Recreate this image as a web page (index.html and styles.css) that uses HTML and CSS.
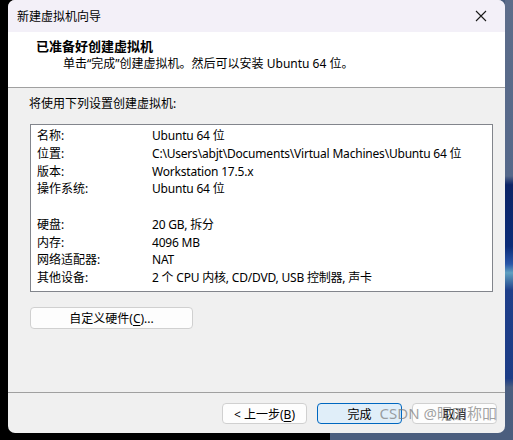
FILE: index.html
```html
<!DOCTYPE html>
<html lang="zh-CN">
<head>
  <meta charset="UTF-8" />
  <title>新建虚拟机向导</title>
  <link rel="stylesheet" href="styles.css">
</head>
<body>
  <div class="screen">
    <div class="gutter"></div>
    <div class="window">
      <div class="titlebar">
        <span class="title">新建虚拟机向导</span>
        <svg class="close" width="12" height="12" viewBox="0 0 12 12">
          <path d="M1 1 L11 11 M11 1 L1 11" stroke="#1a1a1a" stroke-width="1.1" fill="none"/>
        </svg>
      </div>

      <div class="header">
        <h1>已准备好创建虚拟机</h1>
        <p>单击“完成”创建虚拟机。然后可以安装 Ubuntu 64 位。</p>
      </div>

      <div class="content">
        <div class="intro">将使用下列设置创建虚拟机:</div>
        <div class="summary">
          <div class="row"><span class="key">名称:</span><span class="val">Ubuntu 64 位</span></div>
          <div class="row"><span class="key">位置:</span><span class="val">C:\Users\abjt\Documents\Virtual Machines\Ubuntu 64 位</span></div>
          <div class="row"><span class="key">版本:</span><span class="val">Workstation 17.5.x</span></div>
          <div class="row"><span class="key">操作系统:</span><span class="val">Ubuntu 64 位</span></div>
          <div class="row"></div>
          <div class="row"><span class="key">硬盘:</span><span class="val">20 GB, 拆分</span></div>
          <div class="row"><span class="key">内存:</span><span class="val">4096 MB</span></div>
          <div class="row"><span class="key">网络适配器:</span><span class="val">NAT</span></div>
          <div class="row"><span class="key">其他设备:</span><span class="val">2 个 CPU 内核, CD/DVD, USB 控制器, 声卡</span></div>
        </div>
        <button class="btn custom">自定义硬件(<u>C</u>)...</button>
      </div>

      <div class="footer">
        <button class="btn">&lt; 上一步(<u>B</u>)</button>
        <button class="btn primary">完成</button>
        <button class="btn">取消</button>
        <span class="watermark">CSDN @昵吅称吅</span>
      </div>
    </div>
    <div class="desktop"></div>
  </div>
</body>
</html>
```

FILE: styles.css
```css
* {
  box-sizing: border-box;
  margin: 0;
  padding: 0;
}
body {
  background: #000;
  font-family: "Noto Sans", "Noto Sans CJK SC", sans-serif;
  font-size: 12px;
  color: #000;
}
.screen {
  display: flex;
  width: 513px;
  height: 440px;
  background: linear-gradient(to right, #000 330px, #4b5e7e 330px);
}
.gutter {
  width: 8px;
  background: #000;
}
.desktop {
  width: 8px;
  background: linear-gradient(180deg, #5d6d8a 0%, #55688a 40%, #0c2466 42%, #0b2c78 56%, #2a56a8 60%, #5fa0c0 62%, #1f3f8a 66%, #1c3c86 86%, #4a5e80 88%, #4b5e7e 100%);
}
.window {
  position: relative;
  width: 497px;
  height: 433px;
  background: #f0f0f0;
  border-radius: 7px;
  overflow: hidden;
  display: flex;
  flex-direction: column;
}
.titlebar {
  height: 32px;
  background: #f3f0f8;
  display: flex;
  align-items: center;
  justify-content: space-between;
  padding: 0 18px 0 9px;
}
.title {
  font-size: 12px;
}
.header {
  height: 56px;
  background: #fff;
  border-bottom: 1px solid #a0a0a0;
  padding: 5px 0 0 28px;
}
.header h1 {
  font-size: 13px;
  font-weight: bold;
  line-height: 18px;
}
.header p {
  margin-left: 27px;
  line-height: 18px;
}
.content {
  flex: 1;
  padding: 8px 12px 0 21px;
}
.intro {
  line-height: 16px;
}
.summary {
  margin: 12px 0 0 1px;
  width: 463px;
  height: 168px;
  background: #fff;
  border: 1px solid #82858c;
  padding: 2px 6px;
}
.row {
  display: flex;
  height: 17.75px;
  line-height: 17.75px;
  white-space: nowrap;
}
.key {
  width: 115px;
}
.val {
  letter-spacing: -0.2px;
}
.btn {
  font-family: inherit;
  font-size: 12px;
  color: #000;
  background: #fdfdfd;
  border: 1px solid #d0d0d0;
  border-radius: 4px;
  height: 21px;
  width: 85px;
}
.btn u {
  text-underline-offset: 2px;
}
.custom {
  margin: 15px 0 0 1px;
  width: 163px;
  height: 22px;
}
.footer {
  height: 41px;
  border-top: 1px solid #a0a0a0;
  display: flex;
  justify-content: flex-end;
  gap: 10px;
  padding: 10px 8px 0 0;
}
.primary {
  background: #e0eef9;
  border-color: #0067c0;
}
/* faint site stamp over the bottom-right corner */
.watermark {
  position: absolute;
  right: 8px;
  bottom: 10px;
  font-size: 15px;
  color: rgba(120, 120, 120, 0.7);
  pointer-events: none;
}
```
